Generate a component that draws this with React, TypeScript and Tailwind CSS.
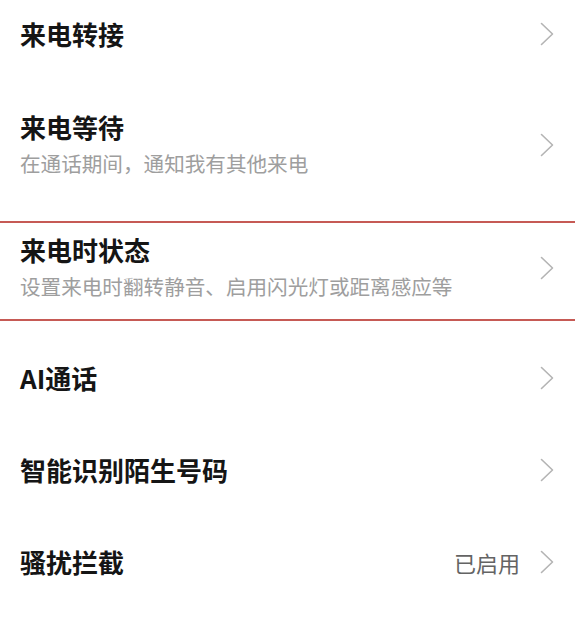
import React from "react";

const FONT = { fontFamily: '"Noto Sans CJK SC", "Noto Sans", sans-serif' };

function Chevron() {
  return (
    <svg width="14" height="24" viewBox="0 0 14 24" className="shrink-0">
      <path d="M1.5 1.5 L12.5 12 L1.5 22.5" fill="none" stroke="#b4b4b4" strokeWidth="1.6" strokeLinecap="round" strokeLinejoin="round" />
    </svg>
  );
}

function Title({ children }: { children: React.ReactNode }) {
  return <div className="text-[26px] leading-[36px] font-bold text-[#151515]">{children}</div>;
}

function Sub({ children }: { children: React.ReactNode }) {
  return <div className="text-[20.6px] leading-[36px] text-[#9e9e9e]">{children}</div>;
}

function SingleRow({ title, value, h }: { title: string; value?: string; h: string }) {
  return (
    <div className={`flex items-center justify-between pl-5 pr-[21px] ${h}`}>
      <Title>{title}</Title>
      <div className="flex items-center gap-5">
        {value && <span className="text-[22px] text-[#646464]">{value}</span>}
        <Chevron />
      </div>
    </div>
  );
}

export default function App() {
  return (
    <div className="w-[575px] h-[627px] bg-white overflow-hidden" style={FONT}>
      <SingleRow title="来电转接" h="h-[68px]" />
      <div className="flex items-center justify-between pl-5 pr-[21px] h-[153px]">
        <div>
          <Title>来电等待</Title>
          <Sub>在通话期间，通知我有其他来电</Sub>
        </div>
        <Chevron />
      </div>
      <div className="border-y-2 border-[#c65a55]">
        <div className="flex items-center justify-between pl-5 pr-[21px] pt-[9px] pb-[15px]">
          <div>
            <Title>来电时状态</Title>
            <Sub>设置来电时翻转静音、启用闪光灯或距离感应等</Sub>
          </div>
          <Chevron />
        </div>
      </div>
      <div className="h-[11px]" />
      <SingleRow title="AI通话" h="h-[92px]" />
      <SingleRow title="智能识别陌生号码" h="h-[92px]" />
      <SingleRow title="骚扰拦截" value="已启用" h="h-[92px]" />
    </div>
  );
}
